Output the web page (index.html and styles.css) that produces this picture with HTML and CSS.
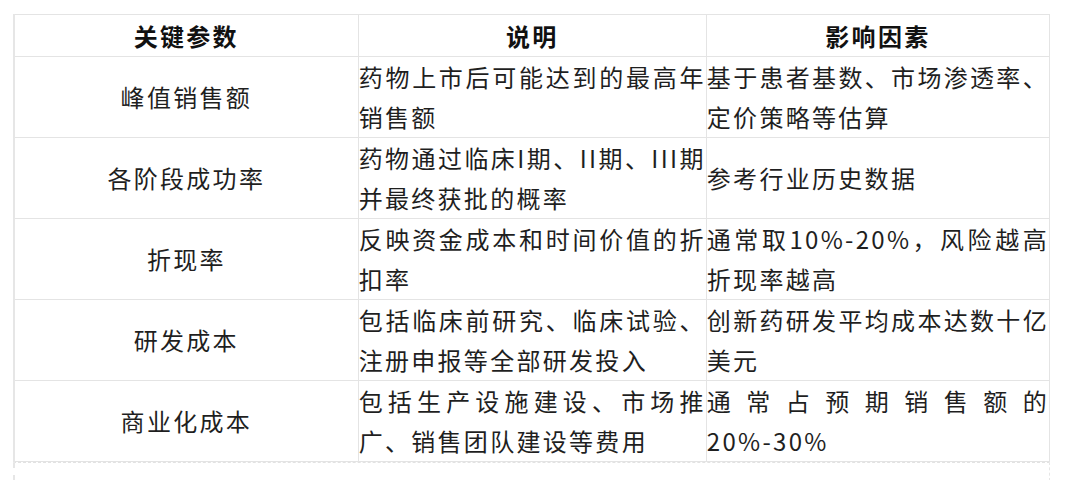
FILE: index.html
```html
<!DOCTYPE html>
<html lang="zh-CN">
<head>
<meta charset="utf-8">
<title>关键参数</title>
<link rel="stylesheet" href="styles.css">
</head>
<body>
<div class="wrap">
  <table class="params">
    <colgroup>
      <col class="c1">
      <col class="c2">
      <col class="c3">
    </colgroup>
    <thead>
      <tr>
        <th>关键参数</th>
        <th>说明</th>
        <th>影响因素</th>
      </tr>
    </thead>
    <tbody>
      <tr>
        <td class="name">峰值销售额</td>
        <td>药物上市后可能达到的最高年销售额</td>
        <td>基于患者基数、市场渗透率、定价策略等估算</td>
      </tr>
      <tr>
        <td class="name">各阶段成功率</td>
        <td>药物通过临床I期、II期、III期并最终获批的概率</td>
        <td>参考行业历史数据</td>
      </tr>
      <tr>
        <td class="name">折现率</td>
        <td>反映资金成本和时间价值的折扣率</td>
        <td>通常取10%-20%，风险越高折现率越高</td>
      </tr>
      <tr>
        <td class="name">研发成本</td>
        <td>包括临床前研究、临床试验、注册申报等全部研发投入</td>
        <td>创新药研发平均成本达数十亿美元</td>
      </tr>
      <tr>
        <td class="name">商业化成本</td>
        <td>包括生产设施建设、市场推广、销售团队建设等费用</td>
        <td>通常占预期销售额的<span class="nb">20%-30%</span></td>
      </tr>
    </tbody>
  </table>
  <div class="next"></div>
</div>
</body>
</html>
```

FILE: styles.css
```css
html, body {
  margin: 0;
  padding: 0;
  background: #ffffff;
}

body {
  font-family: "Noto Sans CJK SC", "Noto Sans", sans-serif;
  color: #1f1f1f;
}

.wrap {
  padding: 14px 0 0 13px;
  width: 1037px;
}

.params {
  border-collapse: collapse;
  table-layout: fixed;
  width: 1037px;
  border-left: 2px solid #e6e6e6;
}

.c1 { width: 344px; }
.c2 { width: 348px; }
.c3 { width: 343px; }

.params th,
.params td {
  border: 1px solid #e4e4e4;
  padding: 0;
  font-size: 24px;
  letter-spacing: 2.3px;
  vertical-align: middle;
}

.params th {
  font-weight: 700;
  color: #111;
  line-height: 41px;
  text-align: center;
}

.params td {
  line-height: 40px;
  height: 80px;
  text-align: justify;
}

.params td.name {
  text-align: center;
}

.nb {
  white-space: nowrap;
  display: inline-block;
}

.next {
  height: 18px;
  border-top: 1px dashed #e2e2e2;
  border-left: 2px dashed #e6e6e6;
  border-right: 1px dashed #e6e6e6;
  width: 1034px;
}
```
